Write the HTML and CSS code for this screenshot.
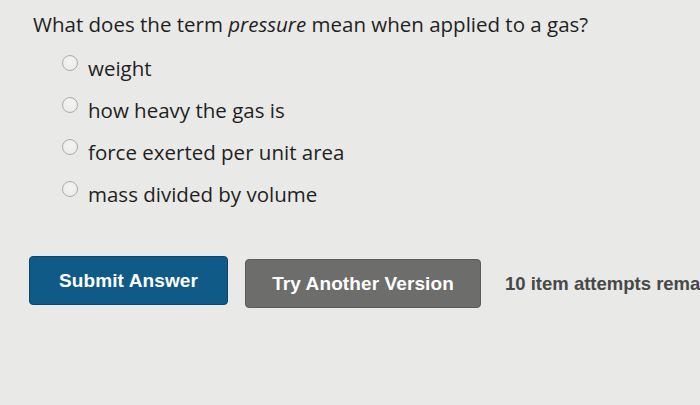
FILE: index.html
```html
<!DOCTYPE html>
<html>
<head>
<meta charset="utf-8">
<link rel="stylesheet" href="styles.css">
</head>
<body>
<div class="page">
  <div class="question">What does the term <em>pressure</em> mean when applied to a gas?</div>
  <ul class="options">
    <li class="option"><span class="radio"></span><span class="label">weight</span></li>
    <li class="option"><span class="radio"></span><span class="label">how heavy the gas is</span></li>
    <li class="option"><span class="radio"></span><span class="label">force exerted per unit area</span></li>
    <li class="option"><span class="radio"></span><span class="label">mass divided by volume</span></li>
  </ul>
  <div class="actions">
    <button class="btn btn-submit">Submit Answer</button>
    <button class="btn btn-try">Try Another Version</button>
    <span class="attempts">10 item attempts remaining</span>
  </div>
</div>
</body>
</html>
```

FILE: styles.css
```css
html, body {
  margin: 0;
  padding: 0;
  background: #e9e9e7;
  overflow: hidden;
}
.page {
  width: 700px;
  height: 405px;
  padding: 10px 0 0 33px;
  box-sizing: border-box;
  font-family: "Open Sans", sans-serif;
  color: #1f1f1f;
  white-space: nowrap;
  overflow: hidden;
}
.question {
  font-size: 20.5px;
  line-height: 28px;
}
.question em {
  font-style: italic;
}
.options {
  list-style: none;
  margin: 16px 0 0 0;
  padding: 0 0 0 29px;
  display: flex;
  flex-direction: column;
  gap: 14px;
}
.option {
  display: flex;
  align-items: center;
  height: 28px;
  font-size: 20.5px;
}
.radio {
  width: 16px;
  height: 16px;
  box-sizing: border-box;
  border: 1.5px solid #acacaa;
  border-radius: 50%;
  background: radial-gradient(circle at 50% 40%, #f4f4f2 0%, #e9e9e7 100%);
  margin-right: 10px;
  margin-top: -10px;
  flex: none;
}
.actions {
  display: flex;
  align-items: flex-start;
  margin-top: 48px;
  margin-left: -4px;
}
.btn {
  flex: none;
  font-family: "Liberation Sans", Arial, sans-serif;
  font-weight: bold;
  font-size: 19px;
  letter-spacing: 0.1px;
  color: #ffffff;
  border-radius: 4px;
  height: 49px;
  padding: 0;
  cursor: pointer;
  box-sizing: border-box;
}
.btn-submit {
  background: #0f5a87;
  width: 199px;
  border: 1px solid #0a4670;
}
.btn-try {
  background: #6d6d6b;
  width: 236px;
  margin-left: 17px;
  margin-top: 3px;
  border: 1px solid #5c5c5a;
}
.attempts {
  flex: none;
  font-family: "Liberation Sans", Arial, sans-serif;
  font-weight: bold;
  font-size: 18.5px;
  color: #484848;
  margin-left: 24px;
  line-height: 49px;
  margin-top: 3px;
}
```
